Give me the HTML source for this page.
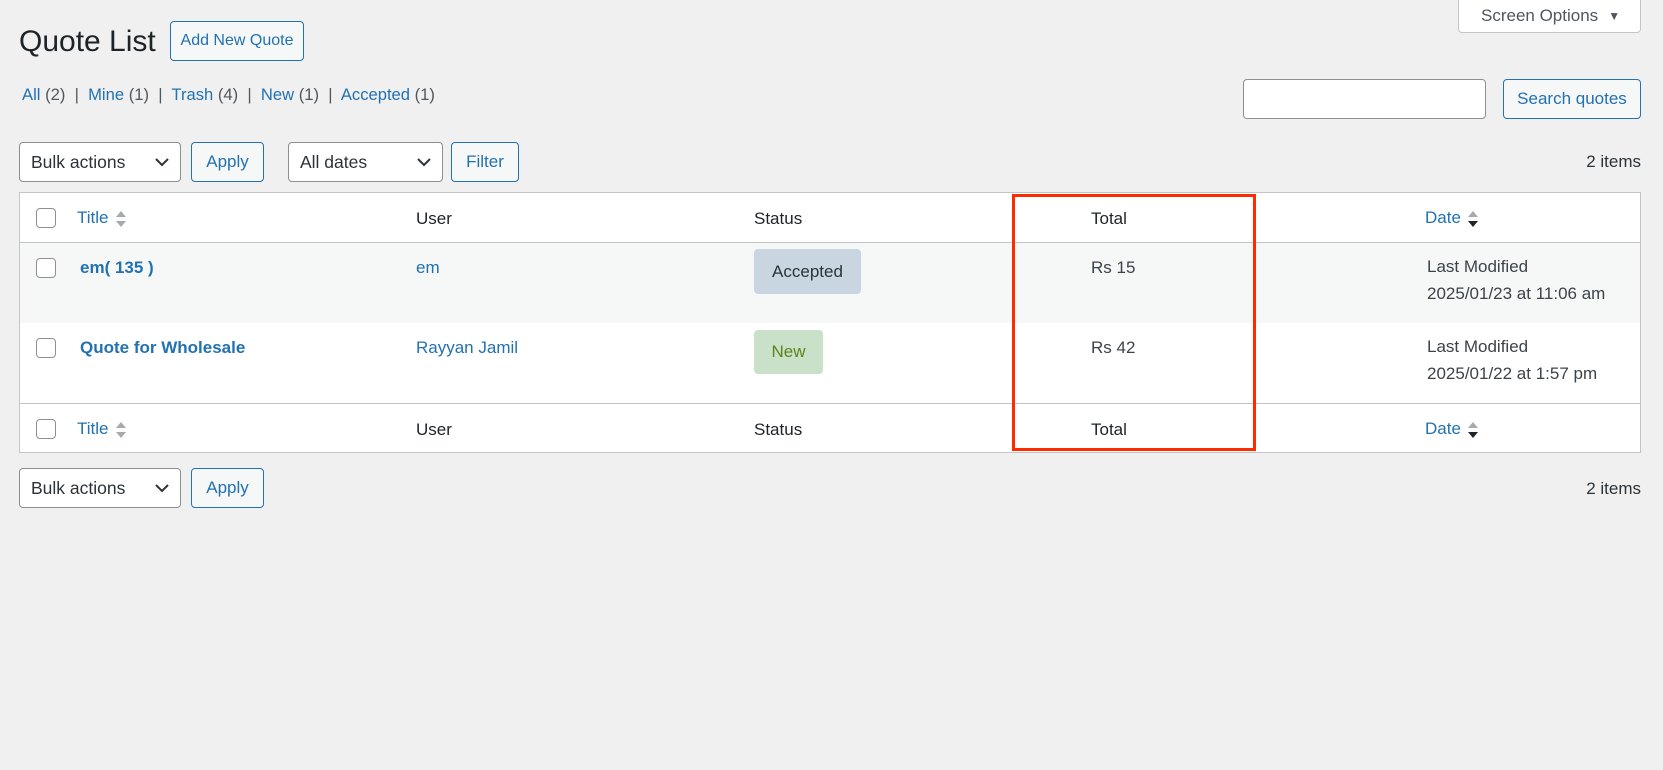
<!DOCTYPE html>
<html><head><style>
*{box-sizing:border-box}
body{margin:0;width:1663px;height:770px;background:#f0f0f1;font-family:"Liberation Sans",sans-serif;font-size:17px;color:#1d2327;position:relative;overflow:hidden}
.a{position:absolute}
a{color:#2271b1;text-decoration:none}
.btn{position:absolute;border:1px solid #2271b1;border-radius:4px;background:#f6f7f7;color:#2271b1;display:flex;align-items:center;justify-content:center;font-size:17px}
.sel{position:absolute;border:1px solid #8c8f94;border-radius:4px;background:#fff;display:flex;align-items:center;padding-left:11px;font-size:17.5px;color:#2c3338}
.sel svg{position:absolute;right:10px;top:50%;margin-top:-5px}
.cb{position:absolute;width:20px;height:20px;border:1px solid #8c8f94;border-radius:4px;background:#fff}
.hl{position:absolute;left:0;right:0;height:1px;background:#c3c4c7}
.sort{display:inline-block;vertical-align:middle;margin-left:6px}
</style></head><body>
<div class="a" style="left:1458px;top:-1px;width:183px;height:34px;background:#fff;border:1px solid #c3c4c7;border-radius:0 0 4px 4px;color:#50575e;font-size:17px;display:flex;align-items:center;padding-left:22px">Screen Options <span style="margin-left:10px;font-size:12px">▼</span></div>
<div class="a" style="left:19px;top:25px;font-size:30px;color:#1d2327">Quote List</div>
<div class="btn" style="left:170px;top:21px;width:134px;height:40px;font-size:16px">Add New Quote</div>
<div class="a" style="left:22px;top:85px;font-size:16.6px;color:#50575e"><a>All</a> (2) &nbsp;|&nbsp; <a>Mine</a> (1) &nbsp;|&nbsp; <a>Trash</a> (4) &nbsp;|&nbsp; <a>New</a> (1) &nbsp;|&nbsp; <a>Accepted</a> (1)</div>
<div class="a" style="left:1243px;top:79px;width:243px;height:40px;background:#fff;border:1px solid #8c8f94;border-radius:4px"></div>
<div class="btn" style="left:1503px;top:79px;width:138px;height:40px">Search quotes</div>
<div class="sel" style="left:19px;top:142px;width:162px;height:40px">Bulk actions<svg width="16" height="10"><path d="M2 2l6 6 6-6" fill="none" stroke="#2c3338" stroke-width="2"/></svg></div>
<div class="btn" style="left:191px;top:142px;width:73px;height:40px">Apply</div>
<div class="sel" style="left:288px;top:142px;width:155px;height:40px">All dates<svg width="16" height="10"><path d="M2 2l6 6 6-6" fill="none" stroke="#2c3338" stroke-width="2"/></svg></div>
<div class="btn" style="left:451px;top:142px;width:68px;height:40px">Filter</div>
<div class="a" style="right:22px;top:152px;color:#2c3338">2 items</div>

<div class="a" style="left:19px;top:192px;width:1622px;height:261px;background:#fff;border:1px solid #c3c4c7">
 <div class="a" style="left:0;right:0;top:49px;height:81px;background:#f6f7f7"></div>
 <div class="hl" style="top:49px"></div>
 <div class="hl" style="top:210px"></div>
 <div class="cb" style="left:16px;top:15px"></div>
 <div class="a" style="left:57px;top:15px"><a>Title</a><svg class="sort" width="12" height="20"><path d="M1 8L6 2 11 8z" fill="#a7aaad"/><path d="M1 12L6 18 11 12z" fill="#a7aaad"/></svg></div>
 <div class="a" style="left:396px;top:16px">User</div>
 <div class="a" style="left:734px;top:16px">Status</div>
 <div class="a" style="left:1071px;top:16px">Total</div>
 <div class="a" style="left:1405px;top:15px"><a>Date</a><svg class="sort" width="12" height="20"><path d="M1 8L6 2 11 8z" fill="#a7aaad"/><path d="M1 12L6 18 11 12z" fill="#1d2327"/></svg></div>

 <div class="cb" style="left:16px;top:65px"></div>
 <div class="a" style="left:60px;top:65px;font-weight:bold;color:#2271b1;font-size:17px">em( 135 )</div>
 <div class="a" style="left:396px;top:65px;color:#2271b1">em</div>
 <div class="a" style="left:734px;top:56px;width:107px;height:45px;background:#c9d6e1;border-radius:4px;display:flex;align-items:center;justify-content:center;color:#2c3338">Accepted</div>
 <div class="a" style="left:1071px;top:65px;color:#3c434a">Rs 15</div>
 <div class="a" style="left:1407px;top:65px;color:#3c434a;line-height:27px;margin-top:-5px">Last Modified<br>2025/01/23 at 11:06 am</div>

 <div class="cb" style="left:16px;top:145px"></div>
 <div class="a" style="left:60px;top:145px;font-weight:bold;color:#2271b1;font-size:17px">Quote for Wholesale</div>
 <div class="a" style="left:396px;top:145px;color:#2271b1">Rayyan Jamil</div>
 <div class="a" style="left:734px;top:137px;width:69px;height:44px;background:#c8e1c8;border-radius:4px;display:flex;align-items:center;justify-content:center;color:#5b841b">New</div>
 <div class="a" style="left:1071px;top:145px;color:#3c434a">Rs 42</div>
 <div class="a" style="left:1407px;top:145px;color:#3c434a;line-height:27px;margin-top:-5px">Last Modified<br>2025/01/22 at 1:57 pm</div>

 <div class="cb" style="left:16px;top:226px"></div>
 <div class="a" style="left:57px;top:226px"><a>Title</a><svg class="sort" width="12" height="20"><path d="M1 8L6 2 11 8z" fill="#a7aaad"/><path d="M1 12L6 18 11 12z" fill="#a7aaad"/></svg></div>
 <div class="a" style="left:396px;top:227px">User</div>
 <div class="a" style="left:734px;top:227px">Status</div>
 <div class="a" style="left:1071px;top:227px">Total</div>
 <div class="a" style="left:1405px;top:226px"><a>Date</a><svg class="sort" width="12" height="20"><path d="M1 8L6 2 11 8z" fill="#a7aaad"/><path d="M1 12L6 18 11 12z" fill="#1d2327"/></svg></div>
</div>
<div class="a" style="left:1012px;top:194px;width:244px;height:257px;border:3px solid #ff2a00"></div>

<div class="sel" style="left:19px;top:468px;width:162px;height:40px">Bulk actions<svg width="16" height="10"><path d="M2 2l6 6 6-6" fill="none" stroke="#2c3338" stroke-width="2"/></svg></div>
<div class="btn" style="left:191px;top:468px;width:73px;height:40px">Apply</div>
<div class="a" style="right:22px;top:479px;color:#2c3338">2 items</div>
</body></html>
